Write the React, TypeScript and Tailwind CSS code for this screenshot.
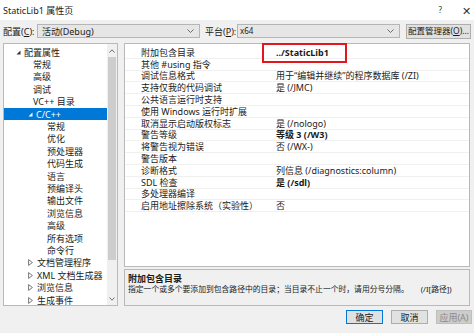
import React from "react";

const font = { fontFamily: '"Noto Sans", "Noto Sans CJK SC", sans-serif' };

function Chevron() {
  return (
    <svg width="7" height="4" viewBox="0 0 7 4" className="shrink-0">
      <path d="M0.5 0.5 L3.5 3.5 L6.5 0.5" fill="none" stroke="#606060" strokeWidth="0.9" />
    </svg>
  );
}

type TreeItem = { text: string; indent: number; tri?: "open" | "closed"; selected?: boolean };

const tree: TreeItem[] = [
  { text: "配置属性", indent: 12, tri: "open" },
  { text: "常规", indent: 29 },
  { text: "高级", indent: 29 },
  { text: "调试", indent: 29 },
  { text: "VC++ 目录", indent: 29 },
  { text: "C/C++", indent: 24, tri: "open", selected: true },
  { text: "常规", indent: 43 },
  { text: "优化", indent: 43 },
  { text: "预处理器", indent: 43 },
  { text: "代码生成", indent: 43 },
  { text: "语言", indent: 43 },
  { text: "预编译头", indent: 43 },
  { text: "输出文件", indent: 43 },
  { text: "浏览信息", indent: 43 },
  { text: "高级", indent: 43 },
  { text: "所有选项", indent: 43 },
  { text: "命令行", indent: 43 },
  { text: "文档管理程序", indent: 24, tri: "closed" },
  { text: "XML 文档生成器", indent: 24, tri: "closed" },
  { text: "浏览信息", indent: 24, tri: "closed" },
  { text: "生成事件", indent: 24, tri: "closed" },
];

const rows: { name: string; value?: string; bold?: boolean }[] = [
  { name: "附加包含目录", value: "../StaticLib1", bold: true },
  { name: "其他 #using 指令" },
  { name: "调试信息格式", value: "用于“编辑并继续”的程序数据库 (/ZI)" },
  { name: "支持仅我的代码调试", value: "是 (/JMC)" },
  { name: "公共语言运行时支持" },
  { name: "使用 Windows 运行时扩展" },
  { name: "取消显示启动版权标志", value: "是 (/nologo)" },
  { name: "警告等级", value: "等级 3 (/W3)", bold: true },
  { name: "将警告视为错误", value: "否 (/WX-)" },
  { name: "警告版本" },
  { name: "诊断格式", value: "列信息 (/diagnostics:column)" },
  { name: "SDL 检查", value: "是 (/sdl)", bold: true },
  { name: "多处理器编译" },
  { name: "启用地址擦除系统（实验性）", value: "否" },
];

export default function App() {
  return (
    <div
      className="w-[474px] h-[333px] bg-[#f0f0f0] overflow-hidden flex flex-col text-[9px] text-[#1a1a1a] leading-none"
      style={font}
    >
      {/* title bar */}
      <div className="h-[20px] bg-white flex items-center shrink-0">
        <span className="ml-[3px] text-[9px] text-[#222]">StaticLib1 属性页</span>
        <span className="ml-auto mr-[20px] text-[8px] text-[#333]">?</span>
        <span className="mr-[3px] text-[11px] text-[#333] font-light">✕</span>
      </div>

      {/* config row */}
      <div className="h-[23px] flex items-center shrink-0 pb-[1px]">
        <span className="ml-[3px] w-[34px]">配置(<span className="underline">C</span>):</span>
        <div className="w-[163px] h-[14px] bg-[#e6e6e6] border border-[#b5b5b5] flex items-center pl-[4px] pr-[5px]">
          <span>活动(Debug)</span>
          <span className="ml-auto"><Chevron /></span>
        </div>
        <span className="ml-[5px] w-[32px]">平台(<span className="underline">P</span>):</span>
        <div className="w-[163px] h-[14px] bg-[#e6e6e6] border border-[#b5b5b5] flex items-center pl-[2px] pr-[5px]">
          <span className="text-[8px]">x64</span>
          <span className="ml-auto"><Chevron /></span>
        </div>
        <div className="ml-[6px] w-[65px] h-[15px] bg-[#e1e1e1] border border-[#adadad] flex items-center justify-center text-[8.5px]">
          配置管理器(<span className="underline">O</span>)...
        </div>
      </div>

      {/* main */}
      <div className="flex shrink-0 h-[263px]">
        {/* tree */}
        <div className="ml-[3px] w-[115px] h-[263px] bg-white border border-[#b9b9b9] flex overflow-hidden">
          <div className="flex-1 pt-[2px] flex flex-col">
            {tree.map((t, i) => (
              <div
                key={i}
                className={`h-[12.4px] shrink-0 flex items-center ${t.selected ? "bg-[#0078d7] text-white" : ""}`}
                style={{ paddingLeft: t.indent }}
              >
                {t.tri === "open" && (
                  <svg width="5" height="5" viewBox="0 0 5 5" className="mr-[3px] shrink-0">
                    <path d="M4.5 0.5 L4.5 4.5 L0.5 4.5 Z" fill={t.selected ? "#ffffff" : "#333"} />
                  </svg>
                )}
                {t.tri === "closed" && (
                  <svg width="5" height="7" viewBox="0 0 5 7" className="mr-[4px] shrink-0">
                    <path d="M0.6 0.6 L4.4 3.5 L0.6 6.4 Z" fill="none" stroke="#555" strokeWidth="0.8" />
                  </svg>
                )}
                <span>{t.text}</span>
              </div>
            ))}
          </div>
          {/* scrollbar */}
          <div className="w-[10px] bg-[#f0f0f0] flex flex-col items-center shrink-0">
            <div className="h-[13px] flex items-center justify-center">
              <svg width="6" height="4" viewBox="0 0 6 4">
                <path d="M0.5 3.5 L3 0.8 L5.5 3.5" fill="none" stroke="#606060" strokeWidth="0.9" />
              </svg>
            </div>
            <div className="w-[8px] h-[203px] bg-[#cdcdcd]" />
            <div className="flex-1" />
            <div className="h-[12px] flex items-center justify-center">
              <svg width="6" height="4" viewBox="0 0 6 4">
                <path d="M0.5 0.5 L3 3.2 L5.5 0.5" fill="none" stroke="#606060" strokeWidth="0.9" />
              </svg>
            </div>
          </div>
        </div>

        {/* right column */}
        <div className="ml-[6px] w-[346px] flex flex-col">
          <div className="relative h-[224px] bg-white border border-[#b9b9b9] pt-[3px]">
            {rows.map((r, i) => (
              <div key={i} className="h-[11.8px] flex items-center border-b border-[#f0f0f0]">
                <span className="pl-[16px] w-[147px] shrink-0 whitespace-nowrap">{r.name}</span>
                <span className={`pl-[4px] whitespace-nowrap ${r.bold ? "font-bold" : ""}`}>{r.value ?? ""}</span>
              </div>
            ))}
            <div className="absolute left-[137px] top-[-1px] w-[85px] h-[20px] border-2 border-[#e3161e]" />
          </div>
          <div className="mt-[2px] h-[37px] border border-[#b9b9b9] bg-[#f0f0f0] px-[3px] pt-[4px] flex flex-col gap-[3px]">
            <span className="font-bold">附加包含目录</span>
            <div className="flex whitespace-nowrap">
              <span className="text-[7.8px]">指定一个或多个要添加到包含路径中的目录；当目录不止一个时，请用分号分隔。</span>
              <span className="ml-[12px] text-[7.8px]">(/I[路径])</span>
            </div>
          </div>
        </div>
      </div>

      {/* buttons */}
      <div className="flex items-start justify-end pr-[2px] pt-[4px] gap-[8px]">
        <div className="w-[37px] h-[14px] bg-[#e1e1e1] border border-[#0078d7] flex items-center justify-center">确定</div>
        <div className="w-[37px] h-[14px] bg-[#e1e1e1] border border-[#adadad] flex items-center justify-center">取消</div>
        <div className="w-[36px] h-[14px] bg-[#cccccc] border border-[#bfbfbf] flex items-center justify-center text-[#8a8a8a]">应用(A)</div>
      </div>
    </div>
  );
}
